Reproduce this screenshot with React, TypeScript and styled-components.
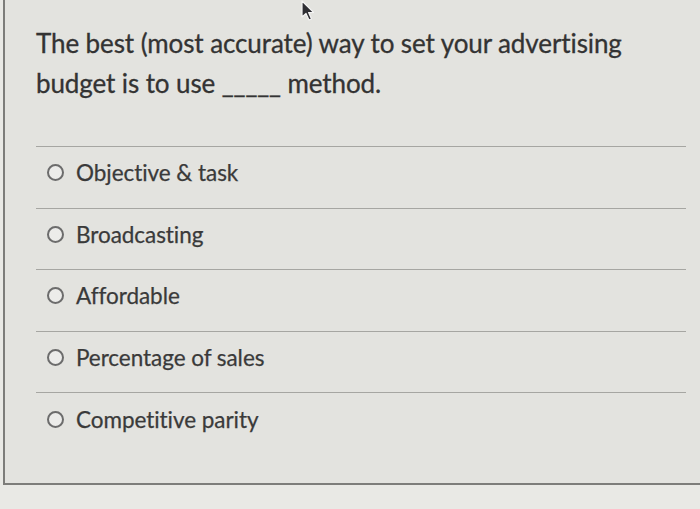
import React from 'react';
import styled, {createGlobalStyle} from 'styled-components';

const GlobalStyle = createGlobalStyle`
  html, body {
    margin: 0;
    padding: 0;
    background: #e9e9e5;
    overflow: hidden;
  }
  body {
    font-family: Lato, "Open Sans", sans-serif;
    color: #3a3a3a;
  }
`

const Page = styled.div`
  position: relative;
  width: 700px;
  height: 509px;
  padding-left: 3px;
  box-sizing: border-box;
`

const Card = styled.div`
  width: 720px;
  height: 485px;
  box-sizing: border-box;
  border-left: 2px solid #7d7d7a;
  border-bottom: 2px solid #7d7d7a;
  background: #e3e3df;
  padding: 23px 0 0 31px;
`

const Question = styled.p`
  margin: 0;
  width: 640px;
  font-size: 26px;
  line-height: 40px;
  letter-spacing: -0.1px;
  color: #333;
  -webkit-text-stroke: 0.3px #333;
`

const Options = styled.div`
  margin-top: 43px;
  width: 650px;
  border-top: 1px solid #a6a6a2;
`

const Option = styled.label<{last?: boolean}>`
  display: flex;
  align-items: center;
  gap: 12px;
  height: 61.5px;
  padding-left: 10px;
  padding-bottom: 9px;
  box-sizing: border-box;
  border-bottom: ${p => (p.last ? 'none' : '1px solid #a6a6a2')};
  font-size: 22.5px;
  letter-spacing: -0.05px;
  color: #3a3a3a;
  -webkit-text-stroke: 0.25px #3a3a3a;
`

const Radio = styled.span`
  width: 13px;
  height: 13px;
  margin-left: 1px;
  border-radius: 50%;
  border: 2px solid #6c6c6c;
  background: #ececea;
  flex-shrink: 0;
`

const Cursor = styled.svg`
  position: absolute;
  left: 300px;
  top: 0;
  pointer-events: none;
`

const answers = [
    'Objective & task',
    'Broadcasting',
    'Affordable',
    'Percentage of sales',
    'Competitive parity',
]

export default function App() {
    return (
        <Page>
            <GlobalStyle/>
            <Card>
                <Question>
                    The best (most accurate) way to set your advertising budget is to use _____ method.
                </Question>
                <Options>
                    {answers.map((a, i) => (
                        <Option key={a} last={i === answers.length - 1}>
                            <Radio/>
                            {a}
                        </Option>
                    ))}
                </Options>
            </Card>
            {/* mouse pointer caught in the photo */}
            <Cursor width="16" height="24" viewBox="0 0 16 24">
                <path d="M2 1 L2 17 L6 13.5 L9 20 L11.5 19 L8.6 12.6 L13.5 12.4 Z"
                      fill="#2e2e33" stroke="#f4f4f4" strokeWidth="1.2" strokeLinejoin="round"/>
            </Cursor>
        </Page>
    );
}
